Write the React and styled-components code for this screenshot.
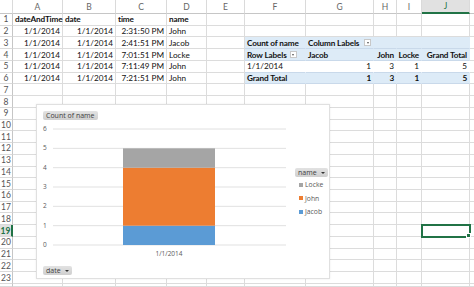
import styled, { createGlobalStyle } from 'styled-components'

const Global = createGlobalStyle`
  html, body { margin: 0; padding: 0; background: #fff; overflow: hidden; }
  body { font-family: "Lato", "Liberation Sans", sans-serif; }
`

const COLS = ['A', 'B', 'C', 'D', 'E', 'F', 'G', 'H', 'I', 'J', '']
const ROWS = 24
const PIVOT_COLS = ['F', 'G', 'H', 'I', 'J']

const cells = {
  A1: { v: 'dateAndTime', b: true }, B1: { v: 'date', b: true }, C1: { v: 'time', b: true }, D1: { v: 'name', b: true },
  A2: { v: '1/1/2014', r: true }, B2: { v: '1/1/2014', r: true }, C2: { v: '2:31:50 PM', r: true }, D2: { v: 'John' },
  A3: { v: '1/1/2014', r: true }, B3: { v: '1/1/2014', r: true }, C3: { v: '2:41:51 PM', r: true }, D3: { v: 'Jacob' },
  A4: { v: '1/1/2014', r: true }, B4: { v: '1/1/2014', r: true }, C4: { v: '7:01:51 PM', r: true }, D4: { v: 'Locke' },
  A5: { v: '1/1/2014', r: true }, B5: { v: '1/1/2014', r: true }, C5: { v: '7:11:49 PM', r: true }, D5: { v: 'John' },
  A6: { v: '1/1/2014', r: true }, B6: { v: '1/1/2014', r: true }, C6: { v: '7:21:51 PM', r: true }, D6: { v: 'John' },
  F3: { v: 'Count of name', b: true }, G3: { v: 'Column Labels', b: true, drop: true },
  F4: { v: 'Row Labels', b: true, drop: true }, G4: { v: 'Jacob', b: true },
  H4: { v: 'John', b: true, r: true }, I4: { v: 'Locke', b: true, r: true }, J4: { v: 'Grand Total', b: true, r: true },
  F5: { v: '1/1/2014' }, G5: { v: '1', r: true }, H5: { v: '3', r: true }, I5: { v: '1', r: true }, J5: { v: '5', r: true },
  F6: { v: 'Grand Total', b: true }, G6: { v: '1', b: true, r: true }, H6: { v: '3', b: true, r: true },
  I6: { v: '1', b: true, r: true }, J6: { v: '5', b: true, r: true },
}

const Page = styled.div`
  position: relative;
  width: 474px;
  height: 287px;
  overflow: hidden;
`

const Grid = styled.div`
  display: grid;
  grid-template-columns: 13px 50px 53px 51px 40px 38px 61px 68px 23px 25px 48px 1fr;
  grid-template-rows: 14px repeat(23, 11.74px) 1fr;
  width: 474px;
  height: 287px;
`

const ColHead = styled.div`
  box-sizing: border-box;
  display: flex;
  align-items: center;
  justify-content: center;
  font-size: 8.5px;
  color: ${p => (p.$active ? '#217346' : '#666')};
  background: ${p => (p.$active ? '#e1e1e1' : '#fff')};
  border-right: 1px solid #dadada;
  border-bottom: ${p => (p.$active ? '2px solid #217346' : '1px solid #c6c6c6')};
`

const RowHead = styled.div`
  box-sizing: border-box;
  display: flex;
  align-items: center;
  justify-content: center;
  font-size: 8.5px;
  font-weight: ${p => (p.$active ? 700 : 400)};
  color: ${p => (p.$active ? '#217346' : '#555')};
  background: ${p => (p.$active ? '#e1e1e1' : '#fff')};
  border-right: ${p => (p.$active ? '2px solid #217346' : '1px solid #c6c6c6')};
  border-bottom: 1px solid #dadada;
`

const Cell = styled.div`
  position: relative;
  box-sizing: border-box;
  display: flex;
  align-items: center;
  justify-content: ${p => (p.$right ? 'flex-end' : 'flex-start')};
  padding: 0 2px;
  font-size: 8.2px;
  font-weight: ${p => (p.$bold ? 700 : 400)};
  letter-spacing: ${p => (p.$bold ? '-0.15px' : '0')};
  color: #111;
  white-space: nowrap;
  overflow: visible;
  background: ${p => (p.$fill ? '#ddebf7' : 'transparent')};
  border-right: 1px solid ${p => (p.$pivot ? (p.$fill ? '#ddebf7' : '#fff') : '#dcdcdc')};
  border-bottom: 1px solid ${p => (p.$pivot ? '#c9d9ea' : '#dcdcdc')};
  z-index: ${p => (p.$bold && !p.$right ? 1 : 0)};

  ${p => p.$selected && `
    outline: 2px solid #217346;
    outline-offset: -1px;
    z-index: 2;
    &::after {
      content: '';
      position: absolute;
      right: -2px;
      bottom: -2px;
      width: 3px;
      height: 3px;
      background: #217346;
      border: 1px solid #fff;
    }
  `}
`

const DropBtn = styled.span`
  display: inline-flex;
  align-items: center;
  justify-content: center;
  box-sizing: border-box;
  width: 7px;
  height: 7px;
  margin-left: ${p => (p.$push ? 'auto' : '3px')};
  background: #fff;
  border: 1px solid #c8c8c8;

  &::before {
    content: '';
    border-left: 1.5px solid transparent;
    border-right: 1.5px solid transparent;
    border-top: 2px solid #555;
  }
`

const Chart = styled.div`
  position: absolute;
  left: 36px;
  top: 104px;
  width: 294px;
  height: 175px;
  box-sizing: border-box;
  padding: 6px 6px 5px 6px;
  background: #fff;
  border: 1px solid #e0e0e0;
  box-shadow: 0 0 2px rgba(0, 0, 0, 0.08);
  display: grid;
  grid-template-columns: 1fr auto;
  grid-template-rows: 9px 1fr 9px;
  font-family: "Open Sans", "Liberation Sans", sans-serif;
  z-index: 5;
`

const FieldBtn = styled.div`
  justify-self: start;
  display: inline-flex;
  align-items: center;
  gap: 4px;
  height: 9px;
  padding: 0 3px;
  border-radius: 2px;
  background: linear-gradient(#e2e2e2, #cfcfcf);
  font-size: 7px;
  color: #404040;
  white-space: nowrap;
  grid-column: 1 / 2;
`

const Arrow = styled.span`
  width: 0;
  height: 0;
  border-left: 2px solid transparent;
  border-right: 2px solid transparent;
  border-top: 2.5px solid #333;
`

const Plot = styled.svg`
  display: block;
  width: 248px;
  height: 146px;
  overflow: visible;
`

const Legend = styled.div`
  display: flex;
  flex-direction: column;
  padding: 48px 0 0 4px;
`

const LegendItem = styled.div`
  display: flex;
  align-items: center;
  gap: 2px;
  height: 13.5px;
  padding-left: 4px;
  font-size: 6.8px;
  color: #595959;
`

const Swatch = styled.span`
  width: 4px;
  height: 4px;
  background: ${p => p.$c};
`

const Spacer = styled.div`
  height: 1px;
`

const series = [
  { name: 'Locke', color: '#a5a5a5' },
  { name: 'John', color: '#ed7d31' },
  { name: 'Jacob', color: '#5b9bd5' },
]

function ChartPanel() {
  const base = 125
  const step = 19.33
  const ticks = [0, 1, 2, 3, 4, 5, 6]
  return (
    <Chart>
      <FieldBtn>Count of name</FieldBtn>
      <div />
      <Plot viewBox="0 0 248 146">
        {ticks.map(t => (
          <g key={t}>
            <line x1="10" x2="243" y1={base - t * step} y2={base - t * step} stroke="#d9d9d9" strokeWidth="0.8" />
            <text x="0" y={base - t * step + 2} fontSize="6.5" fill="#595959" fontFamily="Open Sans, sans-serif">{t}</text>
          </g>
        ))}
        <rect x="80" width="92" y={base - step} height={step} fill="#5b9bd5" />
        <rect x="80" width="92" y={base - 4 * step} height={3 * step} fill="#ed7d31" />
        <rect x="80" width="92" y={base - 5 * step} height={step} fill="#a5a5a5" />
        <text x="126" y="136" fontSize="6.5" fill="#595959" textAnchor="middle" fontFamily="Open Sans, sans-serif">1/1/2014</text>
      </Plot>
      <Legend>
        <FieldBtn>name <Arrow /></FieldBtn>
        <Spacer />
        {series.map(s => (
          <LegendItem key={s.name}><Swatch $c={s.color} />{s.name}</LegendItem>
        ))}
      </Legend>
      <FieldBtn>date <Arrow /></FieldBtn>
    </Chart>
  )
}

export default function App() {
  const out = []
  out.push(<ColHead key="corner" />)
  COLS.forEach(c => out.push(<ColHead key={'h' + c} $active={c === 'J'}>{c}</ColHead>))
  for (let r = 1; r <= ROWS; r++) {
    out.push(<RowHead key={'r' + r} $active={r === 19}>{r < ROWS ? r : ''}</RowHead>)
    COLS.forEach(c => {
      const id = c + r
      const d = cells[id] || {}
      const pivot = PIVOT_COLS.includes(c) && r >= 3 && r <= 6
      const fill = pivot && r !== 5
      out.push(
        <Cell
          key={id}
          $bold={d.b}
          $right={d.r}
          $pivot={pivot}
          $fill={fill}
          $selected={id === 'J19'}
        >
          {d.v}
          {d.drop && <DropBtn $push={c === 'G'} />}
        </Cell>
      )
    })
  }
  return (
    <Page>
      <Global />
      <Grid>{out}</Grid>
      <ChartPanel />
    </Page>
  )
}
